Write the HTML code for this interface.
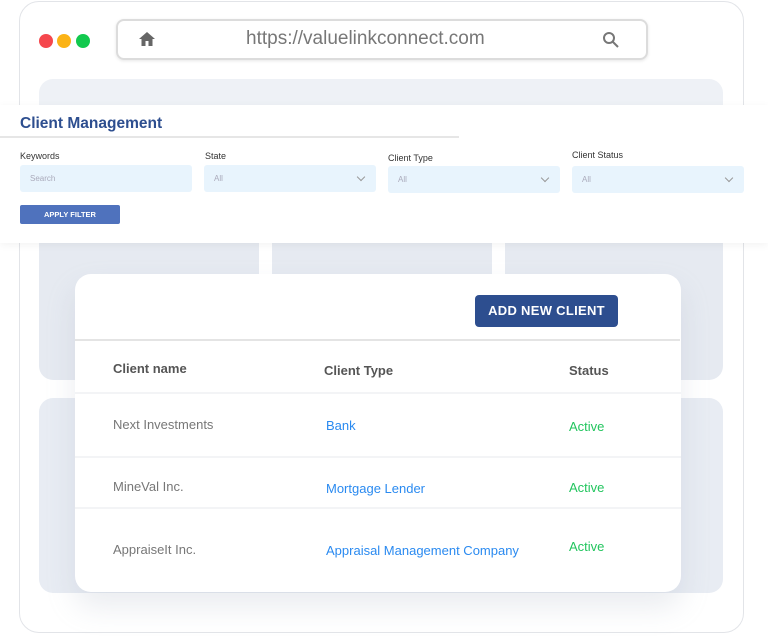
<!DOCTYPE html>
<html><head><style>
body{margin:0;width:768px;height:641px;background:#fff;position:relative;overflow:hidden;font-family:"Liberation Sans",sans-serif}
.a{position:absolute}
.g{background:#eef1f6;border-radius:14px}
.dot{width:14px;height:14px;border-radius:50%;top:34px}
.lbl{font-size:9px;color:#333}
.inp{background:#e8f4fd;height:27px;border-radius:3px;font-size:8px;color:#aab;line-height:27px;padding-left:10px;box-sizing:border-box}
.chev{position:absolute;right:12px;top:9px;width:5px;height:5px;border-right:1px solid #999;border-bottom:1px solid #999;transform:rotate(45deg)}
.row{font-size:13px}
</style></head><body>
<div class="a" style="left:19px;top:1px;width:725px;height:632px;border:1.5px solid #e2e4e8;border-radius:20px;box-sizing:border-box"></div>
<div class="a dot" style="left:39px;background:#f5474d"></div>
<div class="a dot" style="left:57px;background:#fbb316"></div>
<div class="a dot" style="left:76px;background:#12c94e"></div>
<div class="a" style="left:116px;top:19px;width:532px;height:41px;border:2px solid #dcdcdc;border-radius:8px;box-sizing:border-box;box-shadow:0 1px 3px rgba(0,0,0,.1)"></div>
<svg class="a" style="left:138px;top:31px" width="18" height="16" viewBox="0 0 18 16"><path d="M9 1L1 8h2.5v7h4v-5h3v5h4V8H17z" fill="#666"/></svg>
<div class="a" style="left:246px;top:28px;font-size:19px;color:#777">https://valuelinkconnect.com</div>
<svg class="a" style="left:602px;top:31px" width="18" height="18" viewBox="0 0 18 18"><circle cx="7" cy="7" r="5" fill="none" stroke="#777" stroke-width="2"/><path d="M11 11l5 5" stroke="#777" stroke-width="2"/></svg>
<div class="a g" style="left:39px;top:79px;width:684px;height:60px"></div>
<div class="a g" style="left:39px;top:230px;width:220px;height:150px;background:#e6eaf1"></div>
<div class="a g" style="left:272px;top:230px;width:220px;height:60px;border-radius:0;background:#e6eaf1"></div>
<div class="a g" style="left:505px;top:230px;width:218px;height:150px;background:#e6eaf1"></div>
<div class="a g" style="left:39px;top:398px;width:684px;height:195px;background:#e8ecf3"></div>
<div class="a" style="left:0;top:105px;width:768px;height:138px;background:#fff;box-shadow:0 2px 8px rgba(0,0,0,.05)"></div>
<div class="a" style="left:20px;top:115px;font-size:15.5px;font-weight:bold;color:#2d4e8f">Client Management</div>
<div class="a" style="left:0;top:136px;width:459px;height:2px;background:#e6e6e6"></div>
<div class="a lbl" style="left:20px;top:151px">Keywords</div>
<div class="a lbl" style="left:205px;top:151px">State</div>
<div class="a lbl" style="left:388px;top:153px">Client Type</div>
<div class="a lbl" style="left:572px;top:150px">Client Status</div>
<div class="a inp" style="left:20px;top:165px;width:172px">Search</div>
<div class="a inp" style="left:204px;top:165px;width:172px">All<span class="chev"></span></div>
<div class="a inp" style="left:388px;top:166px;width:172px">All<span class="chev"></span></div>
<div class="a inp" style="left:572px;top:166px;width:172px">All<span class="chev"></span></div>
<div class="a" style="left:20px;top:205px;width:100px;height:19px;background:#4f72bd;border-radius:2px;color:#fff;font-size:7.5px;font-weight:bold;text-align:center;line-height:19px">APPLY FILTER</div>
<div class="a" style="left:75px;top:274px;width:606px;height:318px;background:#fff;border-radius:16px;box-shadow:0 15px 30px rgba(150,160,180,.2)"></div>
<div class="a" style="left:475px;top:295px;width:143px;height:32px;background:#2d4e8f;border-radius:4px;color:#fff;font-size:13px;font-weight:bold;text-align:center;line-height:32px;letter-spacing:.3px">ADD NEW CLIENT</div>
<div class="a" style="left:75px;top:339px;width:605px;height:2px;background:#e4e4e4"></div>
<div class="a row" style="left:113px;top:361px;color:#555;font-weight:bold">Client name</div>
<div class="a row" style="left:324px;top:363px;color:#555;font-weight:bold">Client Type</div>
<div class="a row" style="left:569px;top:363px;color:#555;font-weight:bold">Status</div>
<div class="a" style="left:75px;top:392px;width:606px;height:2px;background:#f3f4f6"></div>
<div class="a" style="left:75px;top:456px;width:606px;height:2px;background:#f3f4f6"></div>
<div class="a" style="left:75px;top:507px;width:606px;height:2px;background:#f3f4f6"></div>
<div class="a row" style="left:113px;top:417px;color:#777">Next Investments</div>
<div class="a row" style="left:326px;top:418px;color:#2a8af0">Bank</div>
<div class="a row" style="left:569px;top:419px;color:#22c55e">Active</div>
<div class="a row" style="left:113px;top:479px;color:#777">MineVal Inc.</div>
<div class="a row" style="left:326px;top:481px;color:#2a8af0">Mortgage Lender</div>
<div class="a row" style="left:569px;top:480px;color:#22c55e">Active</div>
<div class="a row" style="left:113px;top:542px;color:#777">AppraiseIt Inc.</div>
<div class="a row" style="left:326px;top:543px;color:#2a8af0">Appraisal Management Company</div>
<div class="a row" style="left:569px;top:539px;color:#22c55e">Active</div>
</body></html>
